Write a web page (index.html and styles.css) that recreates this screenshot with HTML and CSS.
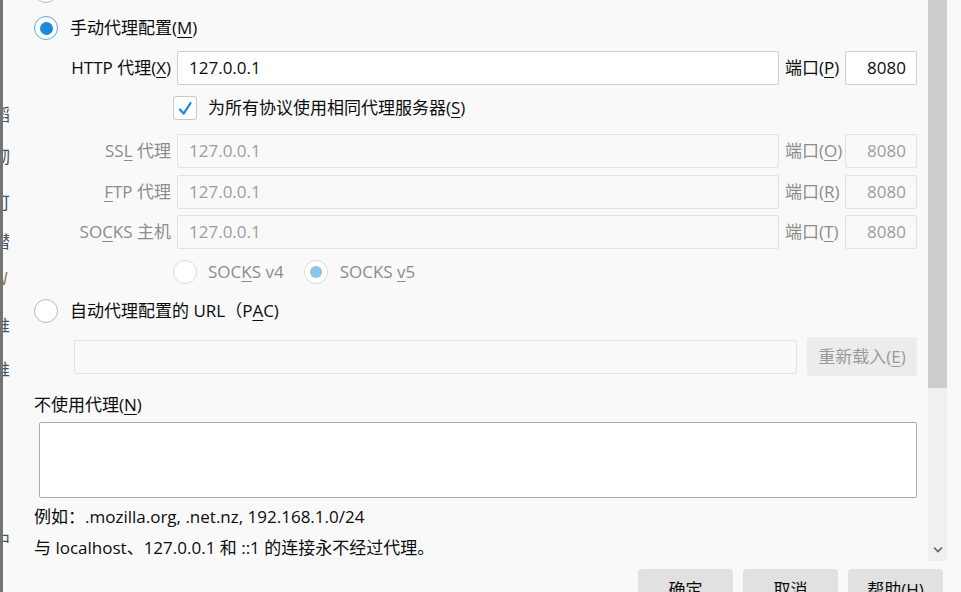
FILE: index.html
```html
<!DOCTYPE html>
<html lang="zh-CN">
<head>
    <meta charset="UTF-8">
    <title>连接设置</title>
    <link rel="stylesheet" href="styles.css">
</head>
<body>
    <div class="frame"></div>
    <div class="edge">
        <span class="peek g1">稻</span>
        <span class="peek g2">彻</span>
        <span class="peek g3">可</span>
        <span class="peek g4">潜</span>
        <span class="peek g5 tan">W</span>
        <span class="peek g6">推</span>
        <span class="peek g7">推</span>
        <span class="peek g8">中</span>
    </div>

    <div class="dialog">
        <div class="pane">
            <div class="content">
                <div class="radio prev"></div>

                <div class="option manual">
                    <span class="radio checked"></span>
                    <span>手动代理配置(<u>M</u>)</span>
                </div>

                <div class="row http">
                    <label class="lbl">HTTP 代理(<u>X</u>)</label>
                    <div class="field">127.0.0.1</div>
                    <label class="port-lbl">端口(<u>P</u>)</label>
                    <div class="field port">8080</div>
                </div>

                <div class="row same">
                    <span class="lbl"></span>
                    <span class="checkbox">
                        <svg width="24" height="24" viewBox="0 0 24 24">
                            <polyline points="6.5,12.5 10.5,17 18,5.5" fill="none" stroke="#1a8ae3" stroke-width="2.4" stroke-linecap="round" stroke-linejoin="round"/>
                        </svg>
                    </span>
                    <span>为所有协议使用相同代理服务器(<u>S</u>)</span>
                </div>

                <div class="row off ssl">
                    <label class="lbl">SS<u>L</u> 代理</label>
                    <div class="field">127.0.0.1</div>
                    <label class="port-lbl">端口(<u>O</u>)</label>
                    <div class="field port">8080</div>
                </div>

                <div class="row off ftp">
                    <label class="lbl"><u>F</u>TP 代理</label>
                    <div class="field">127.0.0.1</div>
                    <label class="port-lbl">端口(<u>R</u>)</label>
                    <div class="field port">8080</div>
                </div>

                <div class="row off socks">
                    <label class="lbl">SO<u>C</u>KS 主机</label>
                    <div class="field">127.0.0.1</div>
                    <label class="port-lbl">端口(<u>T</u>)</label>
                    <div class="field port">8080</div>
                </div>

                <div class="row off versions">
                    <span class="lbl"></span>
                    <span class="radio dim"></span>
                    <span class="ver">SOC<u>K</u>S v4</span>
                    <span class="radio dim-checked"></span>
                    <span>SOCKS <u>v</u>5</span>
                </div>

                <div class="option pac">
                    <span class="radio"></span>
                    <span>自动代理配置的 URL（P<u>A</u>C)</span>
                </div>

                <div class="url-row">
                    <div class="field url"></div>
                    <div class="reload">重新载入(<u>E</u>)</div>
                </div>

                <div class="noproxy">不使用代理(<u>N</u>)</div>
                <div class="textarea"></div>
                <p class="note">例如：.mozilla.org, .net.nz, 192.168.1.0/24</p>
                <p class="note second">与 localhost、127.0.0.1 和 ::1 的连接永不经过代理。</p>
            </div>

            <div class="scrollbar">
                <div class="thumb"></div>
                <div class="track">
                    <svg width="10" height="7" viewBox="0 0 10 7">
                        <polyline points="1,1.5 5,5.5 9,1.5" fill="none" stroke="#606060" stroke-width="1.6"/>
                    </svg>
                </div>
            </div>
            <div class="gutter"></div>
        </div>

        <div class="buttons">
            <div class="btn">确定</div>
            <div class="btn">取消</div>
            <div class="btn">帮助(H)</div>
        </div>
    </div>
</body>
</html>
```

FILE: styles.css
```css
* {
    margin: 0;
    padding: 0;
    box-sizing: border-box;
}

body {
    font-family: "Open Sans", "Noto Sans CJK SC", sans-serif;
    font-size: 17px;
    color: #0c0c0d;
    background: #f9f9f9;
    width: 961px;
    height: 592px;
    overflow: hidden;
    display: flex;
}

u {
    text-decoration-thickness: 1px;
    text-underline-offset: 3px;
}

/* sliver of the window behind the dialog */
.frame {
    width: 3px;
    flex-shrink: 0;
    background: #747474;
}

.edge {
    width: 7px;
    flex-shrink: 0;
    overflow: hidden;
    display: flex;
    flex-direction: column;
}

.peek {
    display: block;
    margin-left: -10px;
    font-family: "Noto Sans CJK SC", sans-serif;
    font-size: 17px;
    line-height: 20px;
    color: #1c3550;
    opacity: 0.85;
}

.g1 { margin-top: 104px; }
.g2 { margin-top: 22px; }
.g3 { margin-top: 26px; }
.g4 { margin-top: 19px; }
.g5 { margin-top: 17px; }
.g6 { margin-top: 27px; }
.g7 { margin-top: 24px; }
.g8 { margin-top: 150px; }
.tan { color: #8a6a2a; }

.dialog {
    width: 951px;
    display: flex;
    flex-direction: column;
}

.pane {
    height: 561px;
    display: flex;
    flex-shrink: 0;
}

.content {
    width: 918px;
    padding-left: 24px;
    display: flex;
    flex-direction: column;
    overflow: hidden;
}

/* radios and checkbox */
.radio {
    width: 24px;
    height: 24px;
    flex-shrink: 0;
    border-radius: 50%;
    border: 1px solid #b9b9b9;
    background: #fff;
    display: flex;
    align-items: center;
    justify-content: center;
}

.radio.checked {
    border: 1.5px solid #58a8ec;
}

.radio.checked::after {
    content: '';
    width: 13px;
    height: 13px;
    border-radius: 50%;
    background: #1d89dc;
}

.radio.dim {
    border-color: #dcdcdc;
}

.radio.dim-checked {
    border-color: #dcdcdc;
}

.radio.dim-checked::after {
    content: '';
    width: 12px;
    height: 12px;
    border-radius: 50%;
    background: #8ec4e8;
}

.radio.prev {
    margin-top: -21px;
}

.checkbox {
    width: 24px;
    height: 24px;
    flex-shrink: 0;
    border: 1px solid #c8c8c8;
    border-radius: 3px;
    background: #fff;
    margin-left: -4px;
    margin-right: 5px;
    display: flex;
}

.option {
    display: flex;
    align-items: center;
    gap: 12px;
    height: 24px;
    line-height: 24px;
}

.manual { margin-top: 13px; }
.pac { margin-top: 15px; }

/* proxy rows */
.row {
    display: flex;
    align-items: center;
    gap: 6px;
    height: 34px;
    line-height: 24px;
}

.lbl {
    width: 137px;
    flex-shrink: 0;
    text-align: right;
    white-space: nowrap;
}

.port-lbl {
    width: 54px;
    flex-shrink: 0;
    white-space: nowrap;
}

.field {
    width: 602px;
    height: 34px;
    flex-shrink: 0;
    border: 1px solid #cfcfcf;
    border-radius: 2px;
    background: #fff;
    padding: 0 11px;
    line-height: 32px;
}

.field.port {
    width: 72px;
    text-align: right;
    padding-right: 10px;
}

.http { margin-top: 11px; }
.same { margin-top: 11px; height: 24px; }
.ssl { margin-top: 14px; }
.ftp { margin-top: 7px; }
.socks { margin-top: 6px; }
.versions { margin-top: 11px; height: 24px; }

.off {
    color: #8c8c8c;
}

.off .field {
    background: #f9f9f9;
    border-color: #e2e2e2;
    color: #9d9d9d;
}

.versions .ver {
    margin-left: 5px;
    margin-right: 14px;
}

.versions .radio.dim {
    margin-left: -4px;
}

.versions span:last-child {
    margin-left: 6px;
}

/* PAC url */
.url-row {
    display: flex;
    align-items: center;
    gap: 10px;
    margin-top: 14px;
    margin-left: 40px;
    height: 39px;
}

.field.url {
    width: 723px;
    background: #f9f9f9;
    border-color: #e2e2e2;
}

.reload {
    width: 110px;
    height: 39px;
    background: #ececec;
    border-radius: 3px;
    color: #9a9a9a;
    text-align: center;
    line-height: 39px;
}

.noproxy {
    margin-top: 18px;
    line-height: 22px;
}

.textarea {
    margin-top: 6px;
    margin-left: 5px;
    width: 878px;
    height: 76px;
    border: 1px solid #ababab;
    border-radius: 2px;
    background: #fff;
}

.note {
    margin-top: 8px;
    line-height: 22px;
}

.note.second {
    margin-top: 9px;
}

/* scrollbar */
.scrollbar {
    width: 19px;
    flex-shrink: 0;
    display: flex;
    flex-direction: column;
}

.thumb {
    height: 388px;
    background: #cdcdcd;
}

.track {
    flex: 1;
    background: #f0f0f0;
    display: flex;
    align-items: flex-end;
    justify-content: center;
    padding-bottom: 8px;
}

.gutter {
    flex: 1;
}

/* dialog buttons */
.buttons {
    display: flex;
    justify-content: flex-end;
    gap: 10px;
    margin-top: 8px;
    padding-right: 18px;
}

.btn {
    width: 95px;
    height: 42px;
    flex-shrink: 0;
    background: #e1e1e1;
    border-radius: 4px;
    text-align: center;
    line-height: 42px;
}
```
